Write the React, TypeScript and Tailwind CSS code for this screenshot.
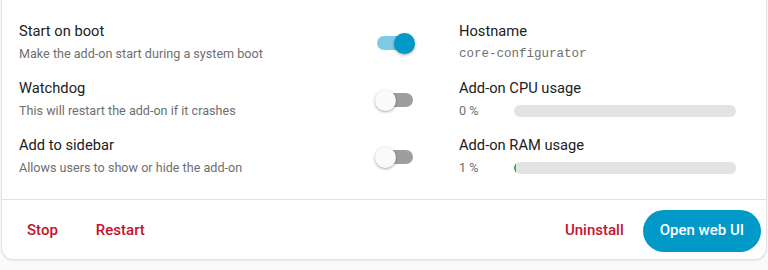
import React from 'react';

const Toggle: React.FC<{ on?: boolean }> = ({ on }) => {
  return (
    <div className="relative w-[40px] h-[22px] flex items-center justify-center">
      <div className={`w-[36px] h-[14px] rounded-full ${on ? 'bg-[#80cbe4]' : 'bg-[#9e9e9e]'}`} />
      <div
        className={`absolute top-[1px] w-[21px] h-[21px] rounded-full shadow-[0_1px_3px_rgba(0,0,0,0.35)] ${
          on ? 'right-0 bg-[#0099c8]' : 'left-0 bg-[#fafafa]'
        }`}
      />
    </div>
  );
};

const Option: React.FC<{ title: string; desc: string; on?: boolean }> = ({ title, desc, on }) => (
  <div className="flex items-center justify-between h-[45px]">
    <div className="flex flex-col">
      <span className="text-[14.7px] leading-[23px] text-[#212121]">{title}</span>
      <span className="text-[12.6px] leading-[22px] text-[#6f6f6f]">{desc}</span>
    </div>
    <Toggle on={on} />
  </div>
);

const Usage: React.FC<{ title: string; value: number }> = ({ title, value }) => (
  <div className="flex flex-col h-[45px]">
    <span className="text-[14.7px] leading-[23px] text-[#212121]">{title}</span>
    <div className="flex items-center h-[22px]">
      <span className="w-[55px] text-[12.6px] text-[#6f6f6f]">{value} %</span>
      <div className="flex-1 h-[12px] rounded-full bg-[#e3e3e3] overflow-hidden">
        <div className="h-full rounded-full bg-[#43a047]" style={{ width: `${value}%` }} />
      </div>
    </div>
  </div>
);

const App: React.FC = () => {
  return (
    <div className="h-[270px] bg-[#fafafa] px-[1px] font-['Roboto',sans-serif]">
      <div className="bg-white border-x border-b border-[#e0e0e0] rounded-b-[12px] shadow-[0_1px_2px_rgba(0,0,0,0.06)]">
        {/* Options and stats */}
        <div className="flex pt-[20px] pb-[20px] pl-[17px] pr-[30px]">
          <div className="w-[396px] flex flex-col gap-[12px]">
            <Option title="Start on boot" desc="Make the add-on start during a system boot" on />
            <Option title="Watchdog" desc="This will restart the add-on if it crashes" />
            <Option title="Add to sidebar" desc="Allows users to show or hide the add-on" />
          </div>
          <div className="flex-1 ml-[44px] flex flex-col gap-[12px]">
            <div className="flex flex-col h-[45px]">
              <span className="text-[14.7px] leading-[23px] text-[#212121]">Hostname</span>
              <span className="text-[12.5px] leading-[22px] text-[#6f6f6f] font-['Liberation_Mono',monospace]">
                core-configurator
              </span>
            </div>
            <Usage title="Add-on CPU usage" value={0} />
            <Usage title="Add-on RAM usage" value={1} />
          </div>
        </div>

        {/* Actions */}
        <div className="flex items-center justify-between h-[60px] pt-[2px] border-t border-[#e0e0e0] pl-[17px] pr-[5px]">
          <div className="flex items-center gap-[22px]">
            <button className="px-2 h-[36px] text-[15px] font-medium text-[#c8102e]">Stop</button>
            <button className="px-2 h-[36px] text-[15px] font-medium text-[#c8102e]">Restart</button>
          </div>
          <div className="flex items-center gap-[11px]">
            <button className="px-2 h-[36px] text-[15px] font-medium text-[#c8102e]">Uninstall</button>
            <button className="h-[42px] px-[17px] rounded-full bg-[#0099c8] text-white text-[15px] font-medium">
              Open web UI
            </button>
          </div>
        </div>
      </div>
    </div>
  );
};

export default App;
